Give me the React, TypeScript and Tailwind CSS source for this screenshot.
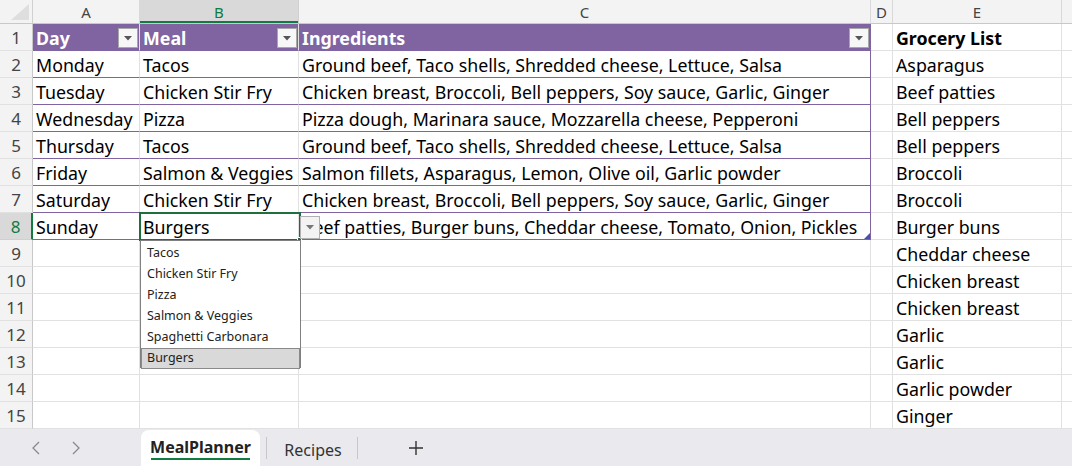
import React from "react";

const cols = [
  { key: "A", w: "w-[107px]" },
  { key: "B", w: "w-[159px]" },
  { key: "C", w: "w-[572px]" },
  { key: "D", w: "w-[22px]" },
  { key: "E", w: "w-[169px]" },
];

const table = [
  ["Monday", "Tacos", "Ground beef, Taco shells, Shredded cheese, Lettuce, Salsa"],
  ["Tuesday", "Chicken Stir Fry", "Chicken breast, Broccoli, Bell peppers, Soy sauce, Garlic, Ginger"],
  ["Wednesday", "Pizza", "Pizza dough, Marinara sauce, Mozzarella cheese, Pepperoni"],
  ["Thursday", "Tacos", "Ground beef, Taco shells, Shredded cheese, Lettuce, Salsa"],
  ["Friday", "Salmon & Veggies", "Salmon fillets, Asparagus, Lemon, Olive oil, Garlic powder"],
  ["Saturday", "Chicken Stir Fry", "Chicken breast, Broccoli, Bell peppers, Soy sauce, Garlic, Ginger"],
  ["Sunday", "Burgers", "Beef patties, Burger buns, Cheddar cheese, Tomato, Onion, Pickles"],
];

const grocery = [
  "Grocery List",
  "Asparagus",
  "Beef patties",
  "Bell peppers",
  "Bell peppers",
  "Broccoli",
  "Broccoli",
  "Burger buns",
  "Cheddar cheese",
  "Chicken breast",
  "Chicken breast",
  "Garlic",
  "Garlic",
  "Garlic powder",
  "Ginger",
];

const font = { fontFamily: '"Noto Sans", "Open Sans", sans-serif' };

function FilterBtn() {
  return (
    <div className="absolute right-[1px] top-[4px] w-[20px] h-[20px] bg-[#f7f7f7] border border-[#a8a8a8] flex items-center justify-center">
      <svg width="8" height="5" viewBox="0 0 8 5">
        <path d="M0 0 L8 0 L4 4.5 Z" fill="#555" />
      </svg>
    </div>
  );
}

export default function App() {
  return (
    <div className="relative w-[1072px] h-[466px] overflow-hidden bg-white text-black" style={font}>
      {/* column header */}
      <div className="flex h-[24px] bg-[#f3f3f3] border-b border-[#c8c8c8]">
        <div className="relative w-[33px] border-r border-[#d0d0d0]">
          <svg className="absolute right-[3px] bottom-[3px]" width="18" height="16" viewBox="0 0 18 16">
            <path d="M18 0 L18 16 L0 16 Z" fill="#dedede" />
          </svg>
        </div>
        {cols.map((c) => (
          <div
            key={c.key}
            className={`${c.w} flex items-center justify-center pt-[1px] text-[15px] border-r ${
              c.key === "B"
                ? "bg-[#d9d9d9] text-[#0f7b3f] border-[#d0d0d0] shadow-[inset_0_-2px_0_#107c41]"
                : "text-[#444] border-[#d9d9d9]"
            }`}
          >
            {c.key}
          </div>
        ))}
        <div className="flex-1" />
      </div>

      {/* rows */}
      {Array.from({ length: 15 }).map((_, i) => {
        const r = i + 1;
        const inTable = r <= 8;
        const isHeader = r === 1;
        const data = r >= 2 && r <= 8 ? table[r - 2] : null;
        const headerTexts = ["Day", "Meal", "Ingredients"];
        const tBorder = inTable ? "border-b border-[#8064a2]" : "border-b border-[#e1e1e1]";
        return (
          <div key={r} className="flex h-[27px] text-[17.8px]">
            <div
              className={`w-[33px] flex items-center justify-center pt-[2px] text-[17px] border-b border-r ${
                r === 8
                  ? "bg-[#d9d9d9] text-[#0f7b3f] border-b-[#d0d0d0] border-r-[#107c41] border-r-2"
                  : "bg-[#f3f3f3] text-[#444] border-b-[#e1e1e1] border-r-[#c8c8c8]"
              }`}
            >
              {r}
            </div>
            {[0, 1, 2].map((ci) => (
              <div
                key={ci}
                className={`relative ${cols[ci].w} ${tBorder} ${
                  ci === 2 ? (inTable ? "border-r border-r-[#8064a2]" : "border-r border-r-[#e1e1e1]") : "border-r border-r-[#e1e1e1]"
                } ${isHeader ? "bg-[#8064a2] text-white font-bold" : ""} flex items-center pt-[3px] px-[3px] whitespace-nowrap overflow-hidden`}
              >
                {isHeader ? headerTexts[ci] : data ? data[ci] : ""}
                {isHeader && <FilterBtn />}
              </div>
            ))}
            <div className="w-[22px] border-b border-r border-[#e1e1e1]" />
            <div
              className={`w-[169px] border-b border-r border-[#e1e1e1] flex items-center pt-[3px] px-[3px] whitespace-nowrap ${
                r === 1 ? "font-bold" : ""
              }`}
            >
              {grocery[i]}
            </div>
            <div className="flex-1 border-b border-[#e1e1e1]" />
          </div>
        );
      })}

      {/* selection on B8 */}
      <div className="absolute left-[139px] top-[212px] w-[162px] h-[29px] border-2 border-[#1e6e3e]" />
      <div className="absolute left-[297px] top-[237px] w-[5px] h-[5px] bg-[#1e6e3e] border border-white" />

      {/* dropdown arrow */}
      <div className="absolute left-[300px] top-[216px] w-[20px] h-[23px] bg-[#f3f3f3] border border-[#b0b0b0] flex items-center justify-center">
        <svg width="8" height="5" viewBox="0 0 8 5">
          <path d="M0 0 L8 0 L4 4.5 Z" fill="#777" />
        </svg>
      </div>

      {/* table resize handle */}
      <svg className="absolute left-[864px] top-[233px]" width="6" height="6" viewBox="0 0 6 6">
        <path d="M6 0 L6 6 L0 6 Z" fill="#4b4fa8" />
      </svg>

      {/* dropdown list */}
      <div
        className="absolute left-[140px] top-[240px] w-[161px] h-[128px] bg-white border border-[#808080] text-[12.5px] text-[#222] pt-[2px]"
        style={{ fontFamily: '"Noto Sans", sans-serif' }}
      >
        {["Tacos", "Chicken Stir Fry", "Pizza", "Salmon & Veggies", "Spaghetti Carbonara"].map((t) => (
          <div key={t} className="h-[21px] flex items-center px-[6px]">
            {t}
          </div>
        ))}
        <div className="h-[21px] flex items-center px-[5px] bg-[#d9d9d9] border border-[#8a8a8a]">Burgers</div>
      </div>

      {/* tab bar */}
      <div className="absolute left-0 right-0 bottom-0 h-[37px] bg-[#e9e9ee] flex items-end">
        <div className="w-[141px] h-full flex items-center">
          <span className="ml-[30px] text-[#8a8a8a] text-[18px]">
            <svg width="12" height="14" viewBox="0 0 12 14">
              <path d="M9 1 L3 7 L9 13" stroke="#8a8a8a" strokeWidth="1.3" fill="none" />
            </svg>
          </span>
          <span className="ml-[28px]">
            <svg width="12" height="14" viewBox="0 0 12 14">
              <path d="M3 1 L9 7 L3 13" stroke="#8a8a8a" strokeWidth="1.3" fill="none" />
            </svg>
          </span>
        </div>
        <div className="relative w-[119px] h-[36px] bg-white rounded-t-[8px] flex items-center justify-center pb-[2px] text-[16px] font-bold text-[#222]">
          MealPlanner
          <div className="absolute left-[10px] right-[10px] bottom-[6px] h-[2px] bg-[#107c41]" />
        </div>
        <div className="h-full flex items-center">
          <div className="ml-[6px] w-px h-[22px] bg-[#c8c8c8]" />
          <div className="w-[90px] text-center text-[16px] text-[#333] pt-[4px] pl-[2px]">Recipes</div>
          <div className="w-px h-[22px] bg-[#c8c8c8]" />
          <div className="ml-[50px] text-[#333]">
            <svg width="16" height="16" viewBox="0 0 16 16">
              <path d="M8 1 V15 M1 8 H15" stroke="#333" strokeWidth="1.4" />
            </svg>
          </div>
        </div>
      </div>
    </div>
  );
}
